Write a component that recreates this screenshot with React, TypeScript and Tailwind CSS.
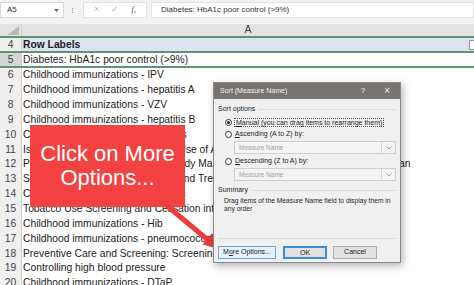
import React from "react";

const rows: { n: number; text: string; bold?: boolean }[] = [
  { n: 4, text: "Row Labels", bold: true },
  { n: 5, text: "Diabetes: HbA1c poor control (>9%)" },
  { n: 6, text: "Childhood immunizations - IPV" },
  { n: 7, text: "Childhood immunizations - hepatitis A" },
  { n: 8, text: "Childhood immunizations - VZV" },
  { n: 9, text: "Childhood immunizations - hepatitis B" },
  { n: 10, text: "Childhood immunizations - rotavirus" },
  { n: 11, text: "Ischemic Vascular Disease (IVD): Use of Aspirin" },
  { n: 12, text: "Preventive Care and Screening: Body Mass Index (BMI) Screening & Follow-Up Plan" },
  { n: 13, text: "Screening for Clinical Depression and Treatment Plan" },
  { n: 14, text: "Childhood immunizations - measles" },
  { n: 15, text: "Tobacco Use Screening and Cessation intervention" },
  { n: 16, text: "Childhood immunizations - Hib" },
  { n: 17, text: "Childhood immunizations - pneumococcal" },
  { n: 18, text: "Preventive Care and Screening: Screening for Obesity" },
  { n: 19, text: "Controlling high blood pressure" },
  { n: 20, text: "Childhood immunizations - DTaP" },
];

function Radio({ checked }: { checked?: boolean }) {
  return (
    <span className="flex h-[7px] w-[7px] items-center justify-center rounded-full border border-[#333] bg-white">
      {checked && <span className="h-[3px] w-[3px] rounded-full bg-[#222]" />}
    </span>
  );
}

function Combo() {
  return (
    <div className="ml-[20px] mr-[4px] flex h-[13px] items-center border border-[#cfcfcf] bg-[#f4f4f4]">
      <span className="flex-1 pl-[4px] text-[6.5px] text-[#a3a3a3]">Measure Name</span>
      <span className="flex h-full w-[14px] items-center justify-center border-l border-[#d6d6d6]">
        <svg width="6" height="4" viewBox="0 0 6 4">
          <path d="M0.5 0.5 L3 3 L5.5 0.5" fill="none" stroke="#999" strokeWidth="0.9" />
        </svg>
      </span>
    </div>
  );
}

function SortDialog() {
  return (
    <div className="absolute left-[213px] top-[82px] flex h-[181px] w-[188px] flex-col border border-[#8a8a8a] bg-[#f0f0f0] text-[7px] text-[#1e1e1e] shadow-[2px_3px_8px_rgba(0,0,0,0.3)]">
      <div className="flex h-[16px] items-center justify-between bg-[#7a7470] pl-[6px] pr-[10px] text-[#f2f2f2]">
        <span>Sort (Measure Name)</span>
        <div className="flex items-center gap-[19px] text-[8px]">
          <span>?</span>
          <span className="text-[10px] leading-none">×</span>
        </div>
      </div>

      <div className="mt-[6px] flex h-[9px] items-center gap-[3px] px-[4px]">
        <span>Sort options</span>
        <span className="flex-1 border-t border-[#dcdcdc]" />
      </div>
      <div className="mt-[4px] flex h-[9px] items-center gap-[2px] pl-[11px]">
        <Radio checked />
        <span className="whitespace-nowrap border border-dotted border-[#555] px-[1px] leading-[7px]">
          <u>M</u>anual (you can drag items to rearrange them)
        </span>
      </div>
      <div className="mt-[3px] flex h-[9px] items-center gap-[3px] pl-[11px]">
        <Radio />
        <span>
          <u>A</u>scending (A to Z) by:
        </span>
      </div>
      <div className="mt-[2px]">
        <Combo />
      </div>
      <div className="mt-[3px] flex h-[9px] items-center gap-[3px] pl-[11px]">
        <Radio />
        <span>
          <u>D</u>escending (Z to A) by:
        </span>
      </div>
      <div className="mt-[2px]">
        <Combo />
      </div>

      <div className="mt-[5px] flex h-[9px] items-center gap-[3px] px-[4px]">
        <span>Summary</span>
        <span className="flex-1 border-t border-[#dcdcdc]" />
      </div>
      <div className="mt-[2px] whitespace-nowrap pl-[10px] text-[6.7px] leading-[8px]">
        <div>Drag items of the Measure Name field to display them in</div>
        <div>any order</div>
      </div>

      <div className="mx-[4px] mt-auto border-t border-[#dcdcdc]" />
      <div className="mb-[3px] mt-[7px] flex h-[13px] gap-[6px] pl-[4px]">
        <button className="w-[58px] whitespace-nowrap border border-[#6fa8e0] bg-[#e5f1fb] text-[7px] text-[#222]">
          M<u>o</u>re Options...
        </button>
        <button className="ml-[1px] w-[44px] border-2 border-[#3c8bd9] bg-[#e1e1e1] text-[7px] text-[#222]">
          OK
        </button>
        <button className="w-[44px] border border-[#adadad] bg-[#e1e1e1] text-[7px] text-[#222]">
          Cancel
        </button>
      </div>
    </div>
  );
}

export default function App() {
  return (
    <div className="relative h-[285px] w-[474px] overflow-hidden bg-white font-['Liberation_Sans',Arial,sans-serif] text-[#222]">
      {/* formula bar */}
      <div className="flex h-[19px] items-center gap-[4px] bg-[#f3f3f3] pt-[1px]">
        <div className="flex h-[16px] w-[64px] items-center justify-between border border-[#dadada] bg-white pl-[6px] pr-[4px] text-[8px] text-[#333]">
          <span>A5</span>
          <svg width="5" height="3" viewBox="0 0 5 3">
            <path d="M0 0 L5 0 L2.5 3 Z" fill="#666" />
          </svg>
        </div>
        <div className="ml-[4px] flex flex-col gap-[1px]">
          <span className="h-[1px] w-[1px] bg-[#999]" />
          <span className="h-[1px] w-[1px] bg-[#999]" />
          <span className="h-[1px] w-[1px] bg-[#999]" />
        </div>
        <div className="ml-[6px] flex h-[16px] w-[64px] items-center justify-around border border-[#e2e2e2] bg-white px-[4px] text-[9px] text-[#b5b5b5]">
          <span>×</span>
          <span>✓</span>
          <span className="font-['Liberation_Serif',serif] text-[8px] italic text-[#555]">
            f<sub className="text-[5px]">x</sub>
          </span>
        </div>
        <div className="flex h-[16px] flex-1 items-center border border-[#e2e2e2] bg-white pl-[9px] text-[8px] text-[#333]">
          Diabetes: HbA1c poor control (&gt;9%)
        </div>
      </div>
      <div className="h-[5px] bg-[#f3f3f3]" />

      {/* column header */}
      <div className="flex h-[14px] border-b-2 border-[#5f9470] bg-[#e3e3e3]">
        <div className="relative w-[22px] border-r border-[#cfcfcf]">
          <svg className="absolute bottom-[1px] right-[2px]" width="12" height="9" viewBox="0 0 12 9">
            <path d="M12 0 L12 9 L0 9 Z" fill="#b9b9b9" />
          </svg>
        </div>
        <div className="flex flex-1 items-center justify-center text-[10.5px] text-[#444]">A</div>
      </div>

      {/* rows */}
      <div className="flex flex-col text-[10.3px]">
        {rows.map((r) => (
          <div
            key={r.n}
            className={`flex h-[14.85px] ${r.n === 4 ? "border-b-2 border-[#5f9470] bg-[#dce3f2]" : ""} ${
              r.n === 5 ? "border-b-2 border-[#5f9470]" : ""
            }`}
          >
            <div
              className={`flex w-[22px] shrink-0 items-center justify-center border-r border-[#d0d0d0] text-[#444] ${
                r.n === 5 ? "bg-[#d6d6d6]" : "bg-[#efefef]"
              }`}
            >
              {r.n}
            </div>
            <div
              className={`relative flex flex-1 items-center whitespace-nowrap pl-[1px] ${
                r.bold ? "font-bold" : ""
              }`}
            >
              {r.text}
              {r.n === 4 && (
                <span className="absolute right-[-3px] top-[2px] h-[10px] w-[8px] border border-[#999] bg-white" />
              )}
            </div>
          </div>
        ))}
      </div>

      {/* callout */}
      <div className="absolute left-[30px] top-[125px] flex h-[82px] w-[155px] flex-col items-center justify-center bg-[#f44242] text-[22px] leading-[24px] text-white">
        <span>Click on More</span>
        <span>Options...</span>
      </div>
      <svg className="pointer-events-none absolute left-0 top-0" width="474" height="285" viewBox="0 0 474 285">
        <line x1="160" y1="200" x2="208" y2="240" stroke="#ee3b3b" strokeWidth="5" />
        <path d="M219 249 L202.5 244.5 L211.8 233.4 Z" fill="#ee3b3b" />
      </svg>

      <SortDialog />
    </div>
  );
}
